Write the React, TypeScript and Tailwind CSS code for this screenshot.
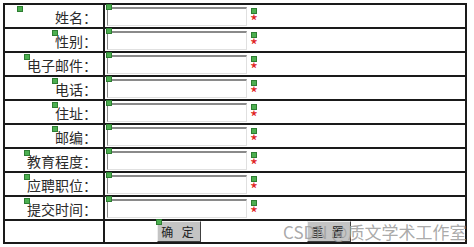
import React from 'react';

const fields = ['姓名：', '性别：', '电子邮件：', '电话：', '住址：', '邮编：', '教育程度：', '应聘职位：', '提交时间：'];

// little green placeholder marks the old browser drew next to elements
const Mark = ({ className = '' }: { className?: string }) => (
	<span
		className={`inline-block w-[6px] h-[6px] bg-[#4caf50] border border-[#2e7d32] ${className}`}
	></span>
);

const font = { fontFamily: '"Noto Sans CJK SC", "Noto Sans", sans-serif' };

const btn =
	'w-[44px] h-[21px] bg-[#c4c4c4] border border-t-[#eeeeee] border-l-[#eeeeee] border-r-[#404040] border-b-[#404040] text-[12px] leading-[18px] text-[#222] tracking-[3px]';

export default function App() {
	return (
		<div className="w-[474px] h-[247px] bg-white relative overflow-hidden" style={font}>
			<div className="pt-[3px] pl-[3px]">
				<div className="w-[464px] border-2 border-[#1a1a1a] flex flex-col">
					{fields.map((label, key) => (
						<div className="h-[24px] flex border-b-2 border-[#1a1a1a]" {...{ key }}>
							<div className="w-[100px] border-r-2 border-[#1a1a1a] flex items-end justify-end">
								<span className="relative inline-block pr-[6px] text-[14px] leading-[19px] text-[#2a2a2a]">
									<Mark className={`absolute top-[-2px] ${key == 0 ? 'left-[-38px]' : 'left-[-3px]'}`} />
									{label}
								</span>
							</div>
							<div className="relative flex-1 flex items-start pl-[2px] pt-[2px]">
								<Mark className="absolute left-[1px] top-[-1px]" />
								<div className="w-[140px] h-[19px] border-t-2 border-l border-[#8a8a8a] border-r border-b border-r-[#e0e0e0] border-b-[#e0e0e0] bg-white"></div>
								<div className="flex flex-col items-center ml-[3px] pt-[1px]">
									<Mark />
									<span className="text-[17px] leading-[12px] mt-[1px] text-[#e02020]">*</span>
								</div>
							</div>
						</div>
					))}
					<div className="h-[21px] flex">
						<div className="w-[100px] border-r-2 border-[#1a1a1a]"></div>
						<div className="relative flex-1 flex items-start pl-[52px]">
							<Mark className="absolute left-[51px] top-[-2px]" />
							<button className={btn}>确 定</button>
							<button className={`ml-[106px] ${btn}`}>重 置</button>
						</div>
					</div>
				</div>
			</div>
			<div className="absolute left-[283px] top-[220px] text-[17px] leading-[24px] text-[#a0a0a0]/90 whitespace-nowrap">
				CSDN @质文学术工作室
			</div>
		</div>
	);
}
